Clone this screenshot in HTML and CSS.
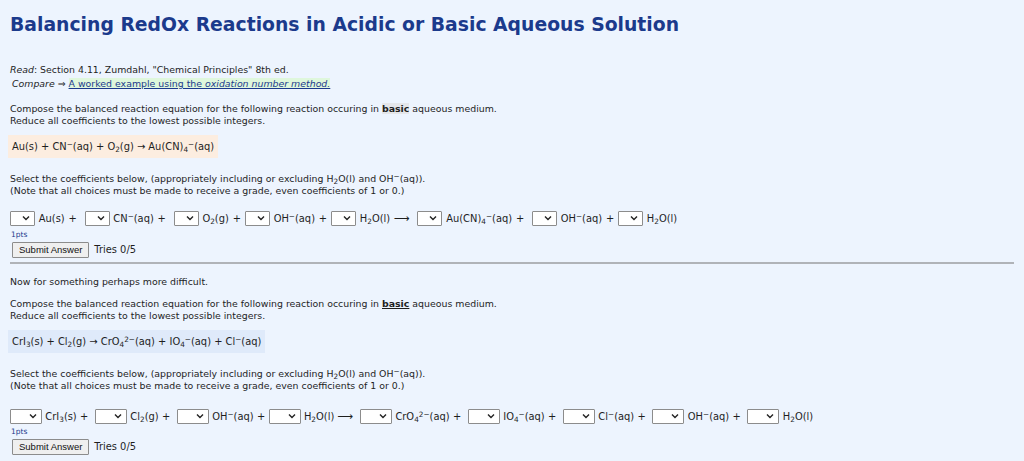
FILE: index.html
```html
<!DOCTYPE html>
<html>
<head>
<meta charset="utf-8">
<link rel="stylesheet" href="styles.css">
</head>
<body>
<div class="page">
  <h1 class="title">Balancing RedOx Reactions in Acidic or Basic Aqueous Solution</h1>

  <div class="read"><i>Read</i>: Section 4.11, Zumdahl, "Chemical Principles" 8th ed.</div>
  <div class="compare"><i>Compare</i> ⇒ <a class="link" href="#">A worked example using the <i>oxidation number method.</i></a></div>

  <div class="block compose">
    <div>Compose the balanced reaction equation for the following reaction occuring in <b class="hl">basic</b> aqueous medium.</div>
    <div>Reduce all coefficients to the lowest possible integers.</div>
  </div>

  <div class="eq eq-peach">Au(s) + CN<sup>−</sup>(aq) + O<sub>2</sub>(g) → Au(CN)<sub>4</sub><sup>−</sup>(aq)</div>

  <div class="block select-note">
    <div>Select the coefficients below, (appropriately including or excluding H<sub>2</sub>O(l) and OH<sup>−</sup>(aq)).</div>
    <div>(Note that all choices must be made to receive a grade, even coefficients of 1 or 0.)</div>
  </div>

  <div class="row row1">
    <span class="sel"></span> Au(s) + &nbsp;<span class="sel"></span> CN<sup>−</sup>(aq) + &nbsp;<span class="sel"></span> O<sub>2</sub>(g) + <span class="sel"></span> OH<sup>−</sup>(aq) + <span class="sel"></span> H<sub>2</sub>O(l) <span class="arrow">⟶</span> &nbsp;<span class="sel"></span> Au(CN)<sub>4</sub><sup>−</sup>(aq) + &nbsp;<span class="sel"></span> OH<sup>−</sup>(aq) + <span class="sel"></span> H<sub>2</sub>O(l)
  </div>
  <div class="pts">1pts</div>
  <div class="submit"><span class="btn">Submit Answer</span> <span class="tries">Tries 0/5</span></div>

  <hr class="sep">

  <div class="now">Now for something perhaps more difficult.</div>

  <div class="block compose2">
    <div>Compose the balanced reaction equation for the following reaction occuring in <b class="ul">basic</b> aqueous medium.</div>
    <div>Reduce all coefficients to the lowest possible integers.</div>
  </div>

  <div class="eq eq-blue">CrI<sub>3</sub>(s) + Cl<sub>2</sub>(g) → CrO<sub>4</sub><sup>2−</sup>(aq) + IO<sub>4</sub><sup>−</sup>(aq) + Cl<sup>−</sup>(aq)</div>

  <div class="block select-note">
    <div>Select the coefficients below, (appropriately including or excluding H<sub>2</sub>O(l) and OH<sup>−</sup>(aq)).</div>
    <div>(Note that all choices must be made to receive a grade, even coefficients of 1 or 0.)</div>
  </div>

  <div class="row row2">
    <span class="sel"></span> CrI<sub>3</sub>(s) + &nbsp;<span class="sel"></span> Cl<sub>2</sub>(g) + &nbsp;<span class="sel"></span> OH<sup>−</sup>(aq) + <span class="sel"></span> H<sub>2</sub>O(l) <span class="arrow">⟶</span> &nbsp;<span class="sel"></span> CrO<sub>4</sub><sup>2−</sup>(aq) + &nbsp;<span class="sel"></span> IO<sub>4</sub><sup>−</sup>(aq) + &nbsp;<span class="sel"></span> Cl<sup>−</sup>(aq) + &nbsp;<span class="sel"></span> OH<sup>−</sup>(aq) + &nbsp;<span class="sel"></span> H<sub>2</sub>O(l)
  </div>
  <div class="pts pts2">1pts</div>
  <div class="submit"><span class="btn">Submit Answer</span> <span class="tries">Tries 0/5</span></div>
</div>
</body>
</html>
```

FILE: styles.css
```css
html, body {
  margin: 0;
  padding: 0;
  background: #edf4fe;
}
.page {
  padding: 0 10px;
  font-family: "DejaVu Sans", Verdana, sans-serif;
  font-size: 9.4px;
  line-height: 12px;
  color: #1e1e1e;
}
.title {
  margin: 0;
  padding-top: 13px;
  font-size: 18.8px;
  line-height: 24px;
  font-weight: bold;
  color: #1b3a8c;
}
.read {
  margin-top: 26px;
  line-height: 14px;
}
.compare {
  line-height: 14px;
  padding-left: 2px;
}
.link {
  color: #1b3a8c;
  background: #dff7dc;
  text-decoration: underline;
}
.block {
  line-height: 12px;
}
.compose {
  margin-top: 12px;
}
.hl {
  background: #e4e6ea;
}
.ul {
  text-decoration: underline;
}
.eq {
  display: inline-block;
  margin-left: -2px;
  padding: 5px 4px;
  line-height: 13px;
  font-size: 9.9px;
}
.eq-peach {
  background: #fcede0;
  margin-top: 8px;
}
.eq-blue {
  background: #dfeafa;
  margin-top: 8px;
}
sub, sup {
  font-size: 7.3px;
  line-height: 0;
  position: relative;
  vertical-align: baseline;
}
sub { top: 2px; }
sup { top: -3px; }
.select-note {
  margin-top: 15px;
}
.row {
  margin-top: 14px;
  line-height: 16px;
  white-space: nowrap;
  font-size: 9.9px;
}
.row1 {
  word-spacing: 0.7px;
}
.row2 {
  margin-top: 17px;
  word-spacing: 0.2px;
}
.sel {
  display: inline-block;
  vertical-align: middle;
  box-sizing: border-box;
  width: 25px;
  height: 15px;
  margin-top: -2px;
  background: #fff url("data:image/svg+xml;utf8,<svg xmlns='http://www.w3.org/2000/svg' width='8' height='6'><path d='M1 1.5 L4 4.5 L7 1.5' fill='none' stroke='%23222' stroke-width='1.4'/></svg>") no-repeat right 4px center;
  border: 1px solid #8c8c8c;
  border-radius: 1px;
}
.row2 .sel {
  width: 32px;
}
.arrow {
  font-size: 11px;
}
.pts {
  font-size: 7.5px;
  line-height: 10px;
  color: #1b3a8c;
  margin-top: 3px;
  padding-left: 1px;
}
.pts2 {
  margin-top: 2px;
}
.submit {
  margin-top: 2px;
  line-height: 16px;
}
.btn {
  display: inline-block;
  font-family: "Liberation Sans", Arial, sans-serif;
  font-size: 9.5px;
  line-height: 14px;
  padding: 0 6px;
  margin-left: 2px;
  background: #efefef;
  border: 1px solid #8c8c8c;
  border-radius: 1px;
  color: #111;
}
.tries {
  margin-left: 2px;
  font-size: 9.9px;
}
.sep {
  margin: 4px 0 0 0;
  border: 0;
  border-top: 2px solid #b0b3b8;
  height: 0;
}
.now {
  margin-top: 12px;
}
.compose2 {
  margin-top: 10px;
}
```
